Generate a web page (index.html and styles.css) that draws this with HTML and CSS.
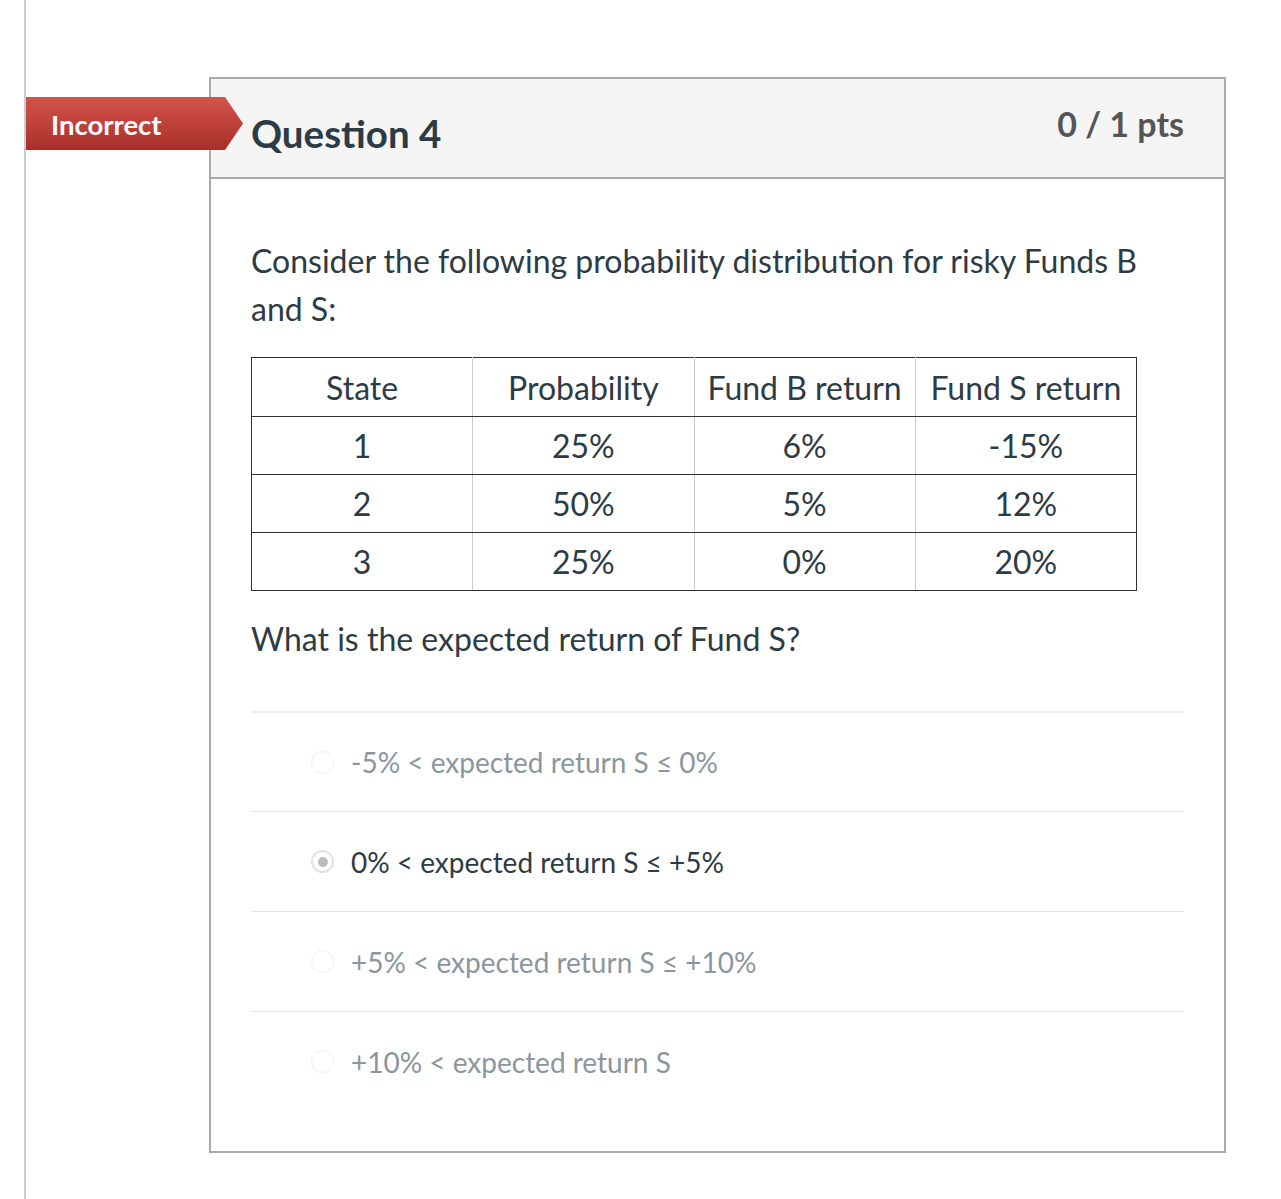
FILE: index.html
```html
<!DOCTYPE html>
<html>
<head>
<meta charset="utf-8">
<link rel="stylesheet" href="styles.css">
</head>
<body>
<div class="page">
  <div class="quiz">
    <div class="card">
      <div class="badge"><span>Incorrect</span></div>
      <div class="card-header">
        <h2 class="q-title">Question 4</h2>
        <div class="q-points">0 / 1 pts</div>
      </div>
      <div class="card-body">
        <p class="q-text">Consider the following probability distribution for risky Funds B and S:</p>
        <table class="dist">
          <tr class="head"><td>State</td><td>Probability</td><td>Fund B return</td><td>Fund S return</td></tr>
          <tr><td>1</td><td>25%</td><td>6%</td><td>-15%</td></tr>
          <tr><td>2</td><td>50%</td><td>5%</td><td>12%</td></tr>
          <tr><td>3</td><td>25%</td><td>0%</td><td>20%</td></tr>
        </table>
        <p class="q-text q-ask">What is the expected return of Fund S?</p>
        <div class="answers">
          <div class="answer"><span class="radio"></span><span class="a-text">-5% &lt; expected return S ≤ 0%</span></div>
          <div class="answer selected"><span class="radio"></span><span class="a-text">0% &lt; expected return S ≤ +5%</span></div>
          <div class="answer"><span class="radio"></span><span class="a-text">+5% &lt; expected return S ≤ +10%</span></div>
          <div class="answer"><span class="radio"></span><span class="a-text">+10% &lt; expected return S</span></div>
        </div>
      </div>
    </div>
  </div>
</div>
</body>
</html>
```

FILE: styles.css
```css
html, body {
  margin: 0;
  padding: 0;
  background: #ffffff;
  font-family: Lato, "Open Sans", sans-serif;
  color: #2d3b45;
}
.page {
  margin-left: 24px;
  border-left: 2px solid #c7cdd1;
  min-height: 1199px;
  box-sizing: border-box;
  padding-top: 77px;
}
.quiz {
  padding-left: 183px;
}
.card {
  position: relative;
  width: 1017px;
  box-sizing: border-box;
  border: 2px solid #aaaaaa;
}
.badge {
  position: absolute;
  left: -185px;
  top: 18px;
  width: 217px;
  height: 53px;
  background: linear-gradient(#d4534a, #a8302a);
  clip-path: polygon(0 0, 199px 0, 217px 50%, 199px 100%, 0 100%);
  display: flex;
  align-items: center;
  padding-left: 25px;
  box-sizing: border-box;
}
.badge span {
  color: #ffffff;
  font-weight: 700;
  font-size: 27.5px;
  margin-top: 1px;
}
.card-header {
  background: #f5f5f5;
  border-bottom: 2px solid #aaaaaa;
  height: 98px;
  display: flex;
  justify-content: space-between;
  align-items: flex-start;
  padding: 0 40px;
}
.q-title {
  margin: 30px 0 0 0;
  font-size: 38.5px;
  font-weight: 700;
  color: #2d3b45;
  line-height: 48px;
}
.q-points {
  margin-top: 23px;
  font-size: 34px;
  font-weight: 700;
  color: #555555;
  line-height: 44px;
}
.card-body {
  padding: 58px 40px 40px 40px;
}
.q-text {
  margin: 0;
  font-size: 32px;
  line-height: 48px;
  color: #2d3b45;
}
.dist {
  margin-top: 24px;
  border-collapse: collapse;
  table-layout: fixed;
  width: 886px;
  border: 1px solid #333333;
}
.dist td {
  border-top: 1px solid #333333;
  border-bottom: 1px solid #333333;
  border-left: 1px solid #cccccc;
  border-right: 1px solid #cccccc;
  text-align: center;
  font-size: 32px;
  height: 57px;
  padding: 0;
  color: #2d3b45;
}
.dist .head td {
  height: 58px;
}
.dist td:first-child { border-left: 1px solid #333333; }
.dist td:last-child { border-right: 1px solid #333333; }
.q-ask {
  margin-top: 24px;
}
.answers {
  margin-top: 48px;
}
.answer {
  border-top: 1px solid #e2e4e6;
  height: 100px;
  display: flex;
  align-items: center;
  padding-left: 60px;
  box-sizing: border-box;
}
.answer:first-child {
  border-top: 2px solid #eeeeee;
}
.radio {
  width: 23px;
  height: 23px;
  border-radius: 50%;
  border: 1px solid #efefef;
  box-sizing: border-box;
  background: #fff;
  margin-right: 17px;
  display: flex;
  align-items: center;
  justify-content: center;
}
.answer.selected .radio {
  border: 2px solid #e3e3e3;
}
.answer.selected .radio::after {
  content: "";
  width: 10px;
  height: 10px;
  border-radius: 50%;
  background: #bcbcbc;
}
.a-text {
  font-size: 28px;
  color: #8b969e;
}
.answer.selected .a-text {
  color: #2d3b45;
}
```
